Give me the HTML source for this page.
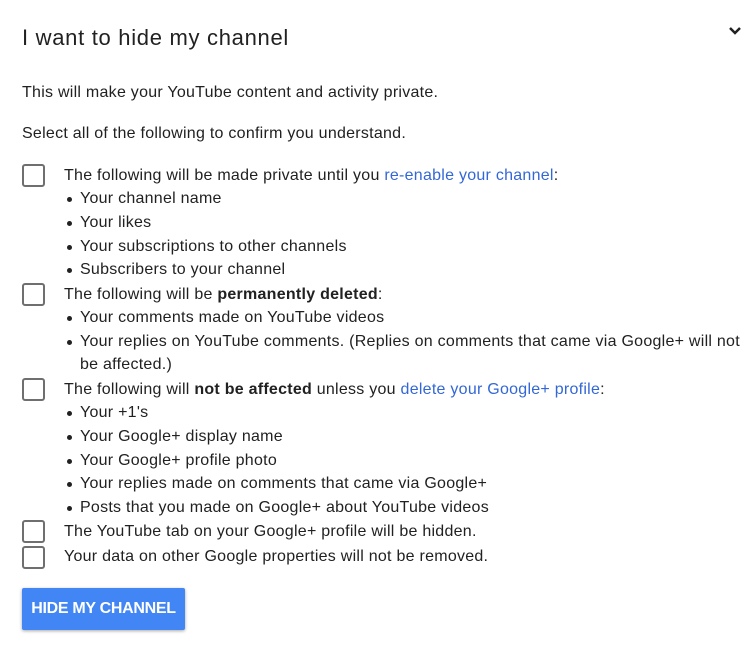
<!DOCTYPE html>
<html><head><meta charset="utf-8"><style>
body{margin:0;width:750px;height:647px;background:#fff;font-family:"Liberation Sans",Arial,sans-serif;color:#212121;position:relative;overflow:hidden}
.a{position:absolute;white-space:nowrap;font-size:16px;line-height:20px;letter-spacing:0.26px}
.t{left:64px}
.b{left:80px}
.b:before{content:"";position:absolute;left:-13px;top:8px;width:5px;height:5px;border-radius:50%;background:#212121}
.cb{position:absolute;left:22px;width:19px;height:19px;border:2px solid #6f6f6f;border-radius:3px}
a{color:#3367d6;text-decoration:none}
</style></head><body>
<div class="a" style="left:22px;top:25px;font-size:22px;line-height:26px;letter-spacing:0.7px">I want to hide my channel</div>
<svg style="position:absolute;left:728px;top:26px" width="14" height="10" viewBox="0 0 14 10"><path d="M2 2l5 5 5-5" fill="none" stroke="#212121" stroke-width="2.5"/></svg>
<div class="a" style="left:22px;top:83px">This will make your YouTube content and activity private.</div>
<div class="a" style="left:22px;top:124px">Select all of the following to confirm you understand.</div>

<div class="cb" style="top:164px"></div>
<div class="a t" style="top:166px">The following will be made private until you <a>re-enable your channel</a>:</div>
<div class="a b" style="top:189px">Your channel name</div>
<div class="a b" style="top:213px">Your likes</div>
<div class="a b" style="top:237px">Your subscriptions to other channels</div>
<div class="a b" style="top:260px">Subscribers to your channel</div>

<div class="cb" style="top:283px"></div>
<div class="a t" style="top:285px">The following will be <b>permanently deleted</b>:</div>
<div class="a b" style="top:308px">Your comments made on YouTube videos</div>
<div class="a b" style="top:332px">Your replies on YouTube comments. (Replies on comments that came via Google+ will not</div>
<div class="a" style="left:80px;top:355px">be affected.)</div>

<div class="cb" style="top:378px"></div>
<div class="a t" style="top:380px">The following will <b>not be affected</b> unless you <a>delete your Google+ profile</a>:</div>
<div class="a b" style="top:403px">Your +1's</div>
<div class="a b" style="top:427px">Your Google+ display name</div>
<div class="a b" style="top:451px">Your Google+ profile photo</div>
<div class="a b" style="top:474px">Your replies made on comments that came via Google+</div>
<div class="a b" style="top:498px">Posts that you made on Google+ about YouTube videos</div>

<div class="cb" style="top:520px"></div>
<div class="a t" style="top:522px">The YouTube tab on your Google+ profile will be hidden.</div>
<div class="cb" style="top:546px"></div>
<div class="a t" style="top:547px">Your data on other Google properties will not be removed.</div>

<div style="position:absolute;left:22px;top:588px;width:163px;height:42px;background:#4285f4;border-radius:2px;box-shadow:0 1px 3px rgba(0,0,0,.35);color:#fff;font-weight:bold;font-size:16px;line-height:42px;text-align:center;letter-spacing:-0.3px">HIDE MY CHANNEL</div>
</body></html>
